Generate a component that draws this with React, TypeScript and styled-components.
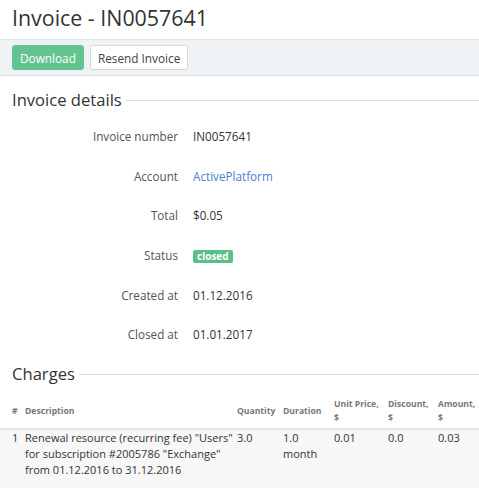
import React from "react";
import styled, { createGlobalStyle } from "styled-components";

const Global = createGlobalStyle`
  html, body { margin: 0; padding: 0; background: #fff; }
  body { font-family: "Open Sans", "DejaVu Sans", sans-serif; color: #333; }
  * { box-sizing: border-box; }
`;

const Page = styled.div`
  width: 479px;
  overflow: hidden;
`;

const Title = styled.h1`
  margin: 0;
  padding: 0 12px;
  height: 39px;
  line-height: 36px;
  font-size: 21.4px;
  font-weight: 400;
  color: #333;
`;

const Toolbar = styled.div`
  display: flex;
  align-items: center;
  gap: 6px;
  height: 37px;
  padding: 0 12px;
  background: #f0f3f6;
  border-top: 1px solid #e1e5e9;
  border-bottom: 1px solid #dcdfe2;
`;

const Button = styled.button<{ $primary?: boolean }>`
  height: 25px;
  padding: 0 7px;
  font-family: "Open Sans", sans-serif;
  font-size: 11.8px;
  border-radius: 3px;
  border: 1px solid ${(p) => (p.$primary ? "#63c48f" : "#d5d8db")};
  background: ${(p) => (p.$primary ? "#63c48f" : "#fff")};
  color: ${(p) => (p.$primary ? "#fff" : "#444")};
  cursor: pointer;
`;

const Section = styled.section`
  padding: 0 0 0 12px;
`;

const SectionHeading = styled.div<{ $top: number }>`
  display: flex;
  align-items: center;
  gap: 4px;
  margin-top: ${(p) => p.$top}px;
  height: 24px;
  font-size: 16.6px;
  color: #333;
  &::after {
    content: "";
    flex: 1;
    height: 1px;
    background: #dcdcdc;
    margin-top: 2px;
  }
`;

const Details = styled.div`
  display: grid;
  grid-template-columns: 166px 1fr;
  grid-auto-rows: 39.7px;
  column-gap: 15px;
  margin-top: 5px;
  font-size: 11.7px;
`;

const Label = styled.div`
  text-align: right;
  color: #555;
  align-self: center;
`;

const Value = styled.div`
  align-self: center;
  color: #333;
`;

const Link = styled.a`
  color: #4b80d0;
  text-decoration: none;
`;

const Badge = styled.span`
  display: inline-block;
  background: #5bbf88;
  color: #fff;
  font-weight: 700;
  font-size: 10px;
  line-height: 13px;
  padding: 0 4px;
  border-radius: 2px;
`;

const Table = styled.table`
  border-collapse: collapse;
  margin-top: 9px;
  margin-left: -12px;
  width: 491px;
  table-layout: fixed;
  font-size: 11px;
`;

const Th = styled.th<{ $w: number }>`
  width: ${(p) => p.$w}px;
  text-align: left;
  font-size: 8.6px;
  font-weight: 700;
  color: #777;
  line-height: 14px;
  padding: 3px 0;
  vertical-align: middle;
  white-space: nowrap;
  border-bottom: 2px solid #e3e3e3;
  &:first-child { padding-left: 12px; }
`;

const Td = styled.td`
  vertical-align: top;
  padding: 0 2px 17px 0;
  line-height: 16px;
  color: #333;
  background: #f7f7f7;
  border-bottom: 1px solid #e3e3e3;
  &:first-child { padding-left: 12px; }
`;

const details: [string, React.ReactNode][] = [
  ["Invoice number", "IN0057641"],
  ["Account", <Link href="#">ActivePlatform</Link>],
  ["Total", "$0.05"],
  ["Status", <Badge>closed</Badge>],
  ["Created at", "01.12.2016"],
  ["Closed at", "01.01.2017"],
];

export default function App() {
  return (
    <Page>
      <Global />
      <Title>Invoice - IN0057641</Title>
      <Toolbar>
        <Button $primary>Download</Button>
        <Button>Resend Invoice</Button>
      </Toolbar>
      <Section>
        <SectionHeading $top={11}>Invoice details</SectionHeading>
        <Details>
          {details.map(([l, v]) => (
            <React.Fragment key={l}>
              <Label>{l}</Label>
              <Value>{v}</Value>
            </React.Fragment>
          ))}
        </Details>
        <SectionHeading $top={7}>Charges</SectionHeading>
        <Table>
          <thead>
            <tr>
              <Th $w={25}>#</Th>
              <Th $w={212}>Description</Th>
              <Th $w={46}>Quantity</Th>
              <Th $w={51}>Duration</Th>
              <Th $w={54}>
                Unit Price,
                <br />$
              </Th>
              <Th $w={50}>
                Discount,
                <br />$
              </Th>
              <Th $w={53}>
                Amount,
                <br />$
              </Th>
            </tr>
          </thead>
          <tbody>
            <tr>
              <Td>1</Td>
              <Td>
                Renewal resource (recurring fee) "Users" for subscription
                #2005786 "Exchange" from 01.12.2016 to 31.12.2016
              </Td>
              <Td>3.0</Td>
              <Td>
                1.0
                <br />
                month
              </Td>
              <Td>0.01</Td>
              <Td>0.0</Td>
              <Td>0.03</Td>
            </tr>
          </tbody>
        </Table>
      </Section>
    </Page>
  );
}
